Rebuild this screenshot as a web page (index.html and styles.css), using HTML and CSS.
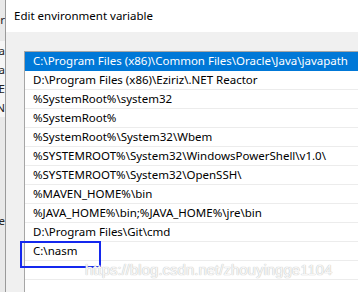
FILE: index.html
```html
<!DOCTYPE html>
<html lang="en">
  <head>
    <meta charset="UTF-8" />
    <title>Edit environment variable</title>
    <link rel="stylesheet" href="styles.css">
  </head>
  <body>
    <div class="page">
      <div class="behind">
        <div class="frag f-title">User</div>
        <div class="frag-list">
          <div class="frag">Va</div>
          <div class="frag">Pa</div>
          <div class="frag">TE</div>
          <div class="frag">N</div>
        </div>
        <div class="frag f-bottom">te</div>
      </div>

      <div class="dialog">
        <div class="titlebar">Edit environment variable</div>
        <div class="content">
          <div class="list">
            <div class="row selected">C:\Program Files (x86)\Common Files\Oracle\Java\javapath</div>
            <div class="row">D:\Program Files (x86)\Eziriz\.NET Reactor</div>
            <div class="row">%SystemRoot%\system32</div>
            <div class="row">%SystemRoot%</div>
            <div class="row">%SystemRoot%\System32\Wbem</div>
            <div class="row">%SYSTEMROOT%\System32\WindowsPowerShell\v1.0\</div>
            <div class="row">%SYSTEMROOT%\System32\OpenSSH\</div>
            <div class="row">%MAVEN_HOME%\bin</div>
            <div class="row">%JAVA_HOME%\bin;%JAVA_HOME%\jre\bin</div>
            <div class="row">D:\Program Files\Git\cmd</div>
            <div class="row">C:\nasm</div>
            <div class="row"></div>
            <div class="row"></div>
          </div>
        </div>
      </div>
    </div>

    <!-- annotation + watermark drawn over the screenshot -->
    <div class="mark"></div>
    <div class="watermark">https://blog.csdn.net/zhouyingge1104</div>
  </body>
</html>
```

FILE: styles.css
```css
body {
  margin: 0;
  width: 358px;
  height: 292px;
  overflow: hidden;
  position: relative;
  font-family: 'Noto Sans', 'Liberation Sans', sans-serif;
  font-size: 11.5px;
  color: #000;
  background-color: #f0f0f0;
}
.page {
  display: flex;
  height: 292px;
}
.behind {
  width: 5px;
  flex-shrink: 0;
  overflow: hidden;
  background-color: #e9e9e9;
  color: #222;
  direction: rtl;
}
.frag {
  white-space: nowrap;
  height: 19px;
  line-height: 19px;
  text-align: right;
}
.f-title {
  margin-top: 10px;
}
.frag-list {
  margin-top: 12px;
  background-color: #f6f6f6;
}
.f-bottom {
  margin-top: 94px;
}
.dialog {
  flex: 1;
  border-left: 1px solid #9a9a9a;
  display: flex;
  flex-direction: column;
  min-width: 0;
}
.titlebar {
  height: 32px;
  line-height: 32px;
  padding-left: 8px;
  background-color: #ffffff;
}
.content {
  flex: 1;
  padding: 19px 0 0 18px;
  background-color: #f0f0f0;
  overflow: hidden;
}
.list {
  border: 1px solid #a6a6a6;
  border-right: none;
  border-bottom: none;
  background-color: #ffffff;
  height: 100%;
}
.row {
  height: 18px;
  line-height: 18px;
  padding-left: 8px;
  border-bottom: 1px solid #ececec;
  white-space: nowrap;
}
.row.selected {
  background-color: #0078d7;
  color: #ffffff;
  border-bottom-color: #0078d7;
}
.mark {
  position: absolute;
  left: 20px;
  top: 241px;
  width: 77px;
  height: 23px;
  border: 2px solid #1428ee;
}
.watermark {
  position: absolute;
  left: 85px;
  top: 261px;
  font-family: 'Liberation Sans', sans-serif;
  font-size: 15px;
  color: #f7f7f7;
  text-shadow: 0 0 1px #bdbdbd, 0 0 1px #cfcfcf;
  white-space: nowrap;
}
```
